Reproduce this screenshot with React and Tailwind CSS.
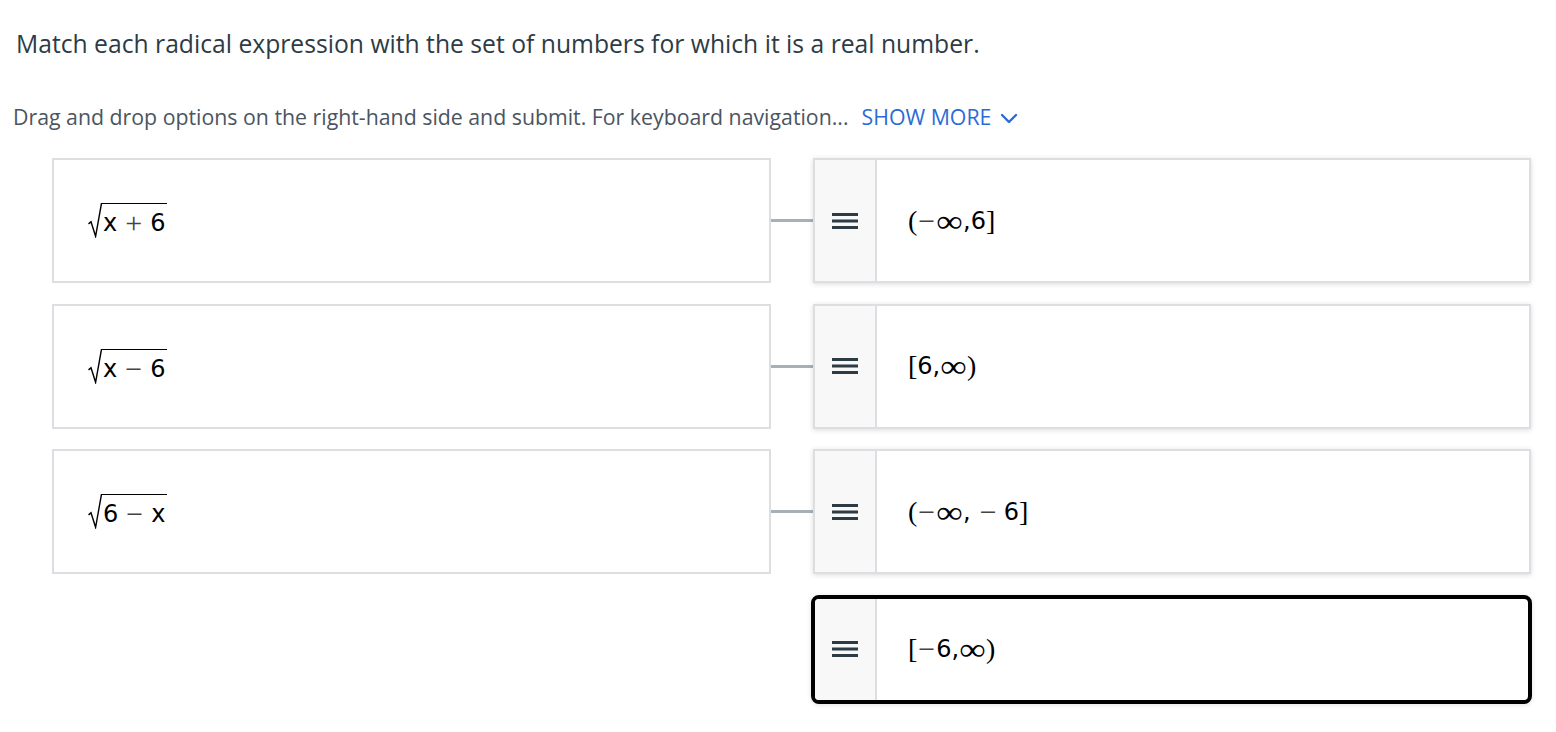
import React from 'react';

const sans = { fontFamily: '"Open Sans", "Noto Sans", sans-serif' };

const Handle = () => (
  <div className="w-[62px] shrink-0 self-stretch flex items-center justify-center bg-[#f8f8f8] border-r-2 border-[#dcdee2]">
    <svg width="26" height="18" viewBox="0 0 26 18">
      <rect x="0" y="1" width="26" height="3" fill="#2d3b45" />
      <rect x="0" y="7.5" width="26" height="3" fill="#2d3b45" />
      <rect x="0" y="14" width="26" height="3" fill="#2d3b45" />
    </svg>
  </div>
);

const Op = ({ children }) => (
  <span className="font-['Liberation_Serif',serif] text-[30px] leading-none text-[#444] mx-[8px]">{children}</span>
);

// square root sign drawn as a stroke joined to the vinculum
const Radical = ({ children }) => (
  <span className="inline-flex items-stretch text-black font-['DejaVu_Sans',sans-serif]">
    <svg className="w-[14px] shrink-0" viewBox="0 0 14 32" preserveAspectRatio="none">
      <path d="M0.5 19 L3 17.2 L7.6 30.5 L13.4 0.7 L14 0.7" fill="none" stroke="#000" strokeWidth="1.4" />
    </svg>
    <span className="border-t-[1.4px] border-black pt-[4px] pl-[1px] pr-[2px] text-[24px] leading-none flex items-center">
      {children}
    </span>
  </span>
);

const Interval = ({ children }) => (
  <span className="text-[24px] leading-none text-black font-['DejaVu_Sans',sans-serif] inline-flex items-center">
    {children}
  </span>
);

const Br = ({ children }) => (
  <span className="font-['Liberation_Serif',serif] text-[28px] leading-none">{children}</span>
);

const Inf = () => (
  <span className="font-['Liberation_Serif',serif] text-[32px] leading-none inline-block scale-x-[1.15] mx-[2px]">∞</span>
);
const Minus = () => (
  <span className="font-['Liberation_Serif',serif] text-[#444] text-[30px] leading-none mx-[1px]">−</span>
);

const rows = [
  {
    left: (
      <Radical>
        x<Op>+</Op>6
      </Radical>
    ),
    right: (
      <Interval>
        <Br>(</Br>
        <Minus />
        <Inf />
        <span>,6</span>
        <Br>]</Br>
      </Interval>
    ),
  },
  {
    left: (
      <Radical>
        x<Op>−</Op>6
      </Radical>
    ),
    right: (
      <Interval>
        <Br>[</Br>
        <span>6,</span>
        <Inf />
        <Br>)</Br>
      </Interval>
    ),
  },
  {
    left: (
      <Radical>
        6<Op>−</Op>x
      </Radical>
    ),
    right: (
      <Interval>
        <Br>(</Br>
        <Minus />
        <Inf />
        <span>,</span>
        <span className="ml-[8px]" />
        <Minus />
        <span className="ml-[6px]">6</span>
        <Br>]</Br>
      </Interval>
    ),
  },
];

const App = () => {
  return (
    <div className="min-h-screen bg-white pt-[28px]" style={sans}>
      <h1 className="pl-[16px] text-[24.7px] leading-[32px] text-[#2d3b45]">
        Match each radical expression with the set of numbers for which it is a real number.
      </h1>
      <div className="pl-[13px] mt-[43px] flex items-center text-[21.3px] leading-[28px] text-[#4a5561]">
        <span>Drag and drop options on the right-hand side and submit. For keyboard navigation...</span>
        <button className="ml-[13px] flex items-center text-[#2b6bd6]">
          SHOW MORE
          <svg className="ml-[9px] mt-[3px]" width="18" height="11" viewBox="0 0 18 11">
            <path d="M2 2l7 7 7-7" fill="none" stroke="#2b6bd6" strokeWidth="2.4" strokeLinecap="round" strokeLinejoin="round" />
          </svg>
        </button>
      </div>
      <div className="pl-[52px] mt-[27px] flex flex-col gap-[20.5px]">
        {rows.map((r, i) => (
          <div key={i} className="flex items-center">
            <div className="w-[719px] h-[125px] border-2 border-[#dcdee2] flex items-center pl-[34px]">
              {r.left}
            </div>
            <div className="w-[42px] h-[3px] bg-[#a7b0ba]" />
            <div className="w-[718px] h-[125px] border-2 border-[#dcdee2] shadow-[0_1px_5px_rgba(0,0,0,0.15)] flex items-center bg-white">
              <Handle />
              <div className="pl-[31px] flex items-center">{r.right}</div>
            </div>
          </div>
        ))}
        <div className="flex">
          <div className="w-[759px] shrink-0" />
          <div className="w-[721px] h-[109px] border-4 border-black rounded-[8px] overflow-hidden shadow-[0_1px_5px_rgba(0,0,0,0.12)] flex items-center bg-white">
            <Handle />
            <div className="pl-[31px] flex items-center">
              <Interval>
                <Br>[</Br>
                <Minus />
                <span>6,</span>
                <Inf />
                <Br>)</Br>
              </Interval>
            </div>
          </div>
        </div>
      </div>
    </div>
  );
};

export default App;
